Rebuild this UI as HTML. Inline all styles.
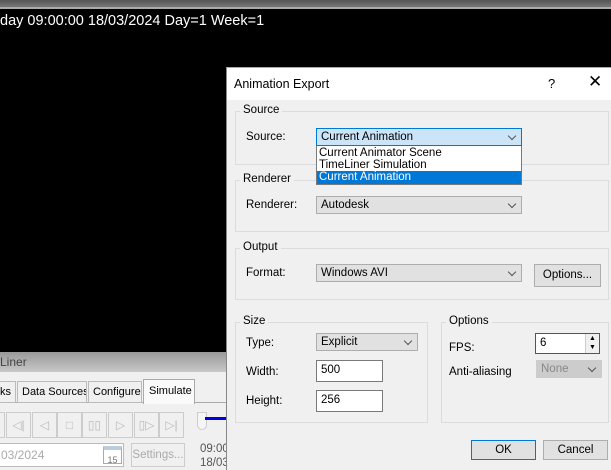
<!DOCTYPE html><html><head><style>
*{box-sizing:border-box;margin:0;padding:0}
body{width:611px;height:470px;overflow:hidden;position:relative;background:#000;font-family:"Liberation Sans","DejaVu Sans",sans-serif;font-size:11.5px;color:#000}
.a{position:absolute;white-space:nowrap}
.grp{position:absolute;border:1px solid #dcdcdc}
.gl{position:absolute;background:#f0f0f0;padding:0 3px;top:-8px;left:4px;font-size:11.5px}
.cb{position:absolute;background:#e1e1e1;border:1px solid #adadad;padding:2px 0 0 4px;height:18px}
.cb:after{content:"";position:absolute;right:6px;top:4px;width:5px;height:5px;border-right:1px solid #555;border-bottom:1px solid #555;transform:rotate(45deg)}
.in{position:absolute;background:#fff;border:1px solid #7a7a7a;padding:3px 0 0 4px}
.bt{position:absolute;background:#e1e1e1;border:1px solid #adadad;text-align:center}
.pb{position:absolute;top:412px;width:25px;height:26px;border:1px solid #ccc;background:#f0f0f0;color:#bbb;text-align:center;line-height:24px;font-size:12px}
.tb{position:absolute;top:381px;height:22px;border:1px solid #bbb;background:#f0f0f0;padding:4px 0 0 4px;font-size:11px;white-space:nowrap;overflow:hidden}
</style></head><body>
<div class="a" style="left:0;top:0;width:611px;height:7px;background:linear-gradient(#555,#777)"></div>
<div class="a" style="left:0;top:7px;width:611px;height:2px;background:#aaa"></div>
<div class="a" style="left:0;top:13px;color:#fff;font-size:14.5px">day 09:00:00 18/03/2024 Day=1 Week=1</div>
<div class="a" style="left:0;top:352px;width:226px;height:20px;background:linear-gradient(#999,#c8c8c8);color:#444;font-size:12px;padding:3px 0 0 0">Liner</div>
<div class="a" style="left:0;top:372px;width:226px;height:98px;background:#f0f0f0"></div>
<div class="a" style="left:0;top:402px;width:226px;height:1px;background:#aaa"></div>
<div class="tb" style="left:-2px;width:18px;padding-left:1px">ks</div>
<div class="tb" style="left:17px;width:70px">Data Sources</div>
<div class="tb" style="left:88px;width:54px">Configure</div>
<div class="tb" style="left:143px;top:379px;width:52px;height:25px;border-color:#aaa;border-bottom:none;background:#fafafa;padding:5px 0 0 5px">Simulate</div>
<div class="pb" style="left:-20px">|</div><div class="pb" style="left:6px">◁|</div><div class="pb" style="left:32px">◁</div><div class="pb" style="left:57px">□</div><div class="pb" style="left:82px">▯▯</div><div class="pb" style="left:108px">▷</div><div class="pb" style="left:134px">▯▷</div><div class="pb" style="left:159px">▷|</div>
<div class="a" style="left:197px;top:412px;width:10px;height:18px;border:1px solid #ccc;border-radius:0 0 5px 5px;background:#f5f5f5"></div>
<div class="a" style="left:205px;top:417px;width:22px;height:3px;background:#0000e0"></div>
<div class="a" style="left:-2px;top:443px;width:126px;height:24px;border:1px solid #bbb;background:#fff;color:#aaa;padding:4px 0 0 2px;font-size:12px">03/2024</div>
<div class="a" style="left:103px;top:446px;width:19px;height:18px;border:1px solid #aaa;background:#fff;font-size:9px;color:#777;text-align:center;padding-top:5px;border-top:4px solid #bcd">15</div>
<div class="bt" style="left:131px;top:443px;width:54px;height:24px;color:#aaa;line-height:22px;border-color:#ccc;background:#f0f0f0">Settings...</div>
<div class="a" style="left:200px;top:442px;color:#555;line-height:14px">09:00<br>18/03</div>
<div class="a" style="left:226px;top:67px;width:385px;height:403px;background:#f0f0f0;border-left:1px solid #888;border-top:1px solid #aaa"></div>
<div class="a" style="left:227px;top:68px;width:384px;height:32px;background:#fff"></div>
<div class="a" style="left:234px;top:77px;font-size:12.5px">Animation Export</div>
<div class="a" style="left:548px;top:76px;font-size:13px">?</div>
<div class="a" style="left:588px;top:72px;font-size:17px;font-weight:300">✕</div>
<div class="grp" style="left:235px;top:111px;width:374px;height:54px"><span class="gl">Source</span></div>
<div class="a" style="left:246px;top:131px">Source:</div>
<div class="cb" style="left:316px;top:128px;width:206px;background:#cce4f7;border-color:#0078d7">Current Animation</div>
<div class="grp" style="left:235px;top:180px;width:374px;height:52px"><span class="gl">Renderer</span></div>
<div class="a" style="left:246px;top:199px">Renderer:</div>
<div class="cb" style="left:316px;top:196px;width:206px">Autodesk</div>
<div class="grp" style="left:235px;top:248px;width:374px;height:52px"><span class="gl">Output</span></div>
<div class="a" style="left:246px;top:267px">Format:</div>
<div class="cb" style="left:316px;top:264px;width:206px">Windows AVI</div>
<div class="bt" style="left:534px;top:264px;width:67px;height:23px;line-height:21px">Options...</div>
<div class="grp" style="left:235px;top:322px;width:193px;height:101px"><span class="gl">Size</span></div>
<div class="a" style="left:246px;top:337px">Type:</div>
<div class="cb" style="left:316px;top:333px;width:102px">Explicit</div>
<div class="a" style="left:246px;top:366px">Width:</div>
<div class="in" style="left:316px;top:360px;width:67px;height:22px">500</div>
<div class="a" style="left:246px;top:395px">Height:</div>
<div class="in" style="left:316px;top:390px;width:67px;height:22px">256</div>
<div class="grp" style="left:441px;top:322px;width:168px;height:101px"><span class="gl">Options</span></div>
<div class="a" style="left:449px;top:342px">FPS:</div>
<div class="in" style="left:535px;top:333px;width:65px;height:21px;border-color:#555">6</div>
<div class="a" style="left:585px;top:334px;width:14px;height:19px;background:#f0f0f0;border-left:1px solid #ccc;font-size:7px;line-height:9px;text-align:center">▲<br>▼</div>
<div class="a" style="left:449px;top:366px">Anti-aliasing</div>
<div class="cb" style="left:536px;top:360px;width:66px;background:#ccc;border-color:#ccc;color:#888">None</div>
<div class="bt" style="left:471px;top:440px;width:65px;height:20px;line-height:18px;border:1px solid #0078d7">OK</div>
<div class="bt" style="left:543px;top:440px;width:65px;height:20px;line-height:18px">Cancel</div>
<div class="a" style="left:316px;top:146px;width:206px;height:39px;background:#fff;border:1px solid #7a7a7a;border-top:none;font-size:11.5px;overflow:hidden">
<div style="padding-left:2px;height:12px;line-height:12px;margin-top:1px">Current Animator Scene</div><div style="padding-left:2px;height:12px;line-height:12px">TimeLiner Simulation</div><div style="padding-left:2px;background:#0078d7;color:#fff;height:13px;line-height:13px">Current Animation</div></div>
</body></html>
